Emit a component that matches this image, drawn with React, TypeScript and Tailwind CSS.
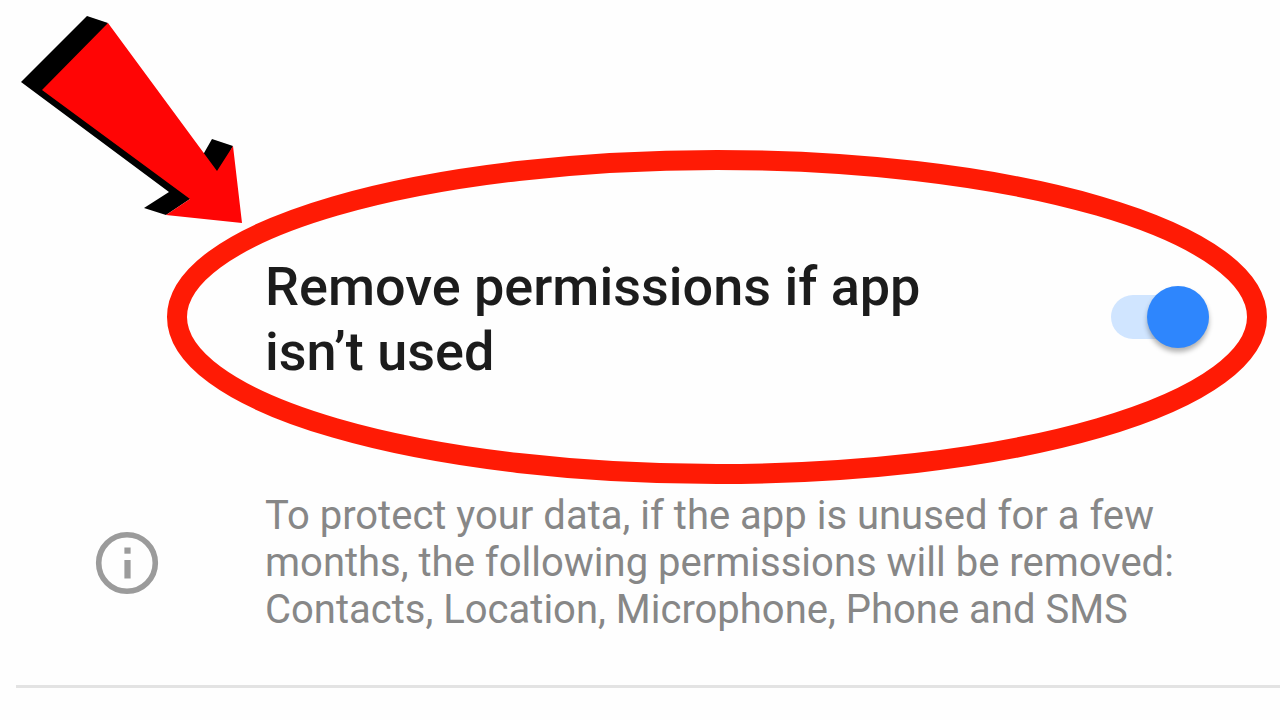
import { useState } from "react";

const Arrow: React.FC = () => (
  <svg
    className="absolute left-0 top-0 h-[240px] w-[270px]"
    viewBox="0 0 270 240"
    aria-hidden="true"
  >
    {/* Black extruded side */}
    <path
      d="M21 82 L87 16 L108 23 L102 34 L194 152 L204 153 L212 139 L233 146 L218 176 L190 199 L166 215 L144 208 L169 192 Z"
      fill="#000000"
    />
    {/* Red face */}
    <path d="M108 23 L217 171 L233 146 L242 223 L166 215 L190 199 L42 90 Z" fill="#ff0505" />
  </svg>
);

const Ring: React.FC = () => (
  <svg
    className="pointer-events-none absolute inset-0 h-full w-full overflow-visible"
    viewBox="0 0 1100 334"
    preserveAspectRatio="none"
    aria-hidden="true"
  >
    <ellipse
      cx="550"
      cy="167"
      rx="540"
      ry="157"
      fill="none"
      stroke="#ff1b05"
      strokeWidth="20"
      vectorEffect="non-scaling-stroke"
    />
  </svg>
);

const InfoIcon: React.FC = () => (
  <svg className="h-16 w-16 shrink-0" viewBox="0 0 64 64" aria-hidden="true">
    <circle cx="32" cy="32" r="28.3" fill="none" stroke="#9b9b9b" strokeWidth="5.6" />
    <rect x="29.4" y="16.5" width="6.2" height="6.2" fill="#9b9b9b" />
    <rect x="29.4" y="29" width="6.2" height="18.5" fill="#9b9b9b" />
  </svg>
);

const App: React.FC = () => {
  const [enabled, setEnabled] = useState(true);

  return (
    <main className="relative min-h-screen bg-[#fefefe] pt-[150px] font-['Roboto','Noto_Sans',sans-serif]">
      <Arrow />

      {/* Setting row */}
      <section className="relative ml-[167px] mr-[13px] flex min-h-[334px] items-center justify-between pl-[98px] pr-[58px]">
        <Ring />
        <label
          htmlFor="remove-permissions"
          className="max-w-[720px] pt-1 text-[54px] font-medium leading-[65px] text-[#1c1c1c]"
        >
          Remove permissions if app isn’t used
        </label>
        <input
          id="remove-permissions"
          type="checkbox"
          role="switch"
          checked={enabled}
          onChange={(e) => setEnabled(e.target.checked)}
          className="flex h-11 w-[98px] shrink-0 cursor-pointer appearance-none items-center rounded-full bg-[#d0e5ff] before:block before:h-[62px] before:w-[62px] before:shrink-0 before:rounded-full before:bg-gray-400 before:shadow-[0_4px_5px_rgba(0,0,0,0.3)] checked:justify-end checked:before:bg-[#2e86fd]"
        />
      </section>

      {/* Explanation */}
      <section className="flex items-center pl-[95px] pr-[60px] pt-2">
        <InfoIcon />
        <p className="ml-[106px] max-w-[930px] text-[40px] leading-[47px] text-[#878787]">
          To protect your data, if the app is unused for a few months, the following permissions
          will be removed: Contacts, Location, Microphone, Phone and SMS
        </p>
      </section>

      <hr className="ml-4 mt-[52px] border-0 border-t-[3px] border-[#e3e3e3]" />
    </main>
  );
};

export default App;
